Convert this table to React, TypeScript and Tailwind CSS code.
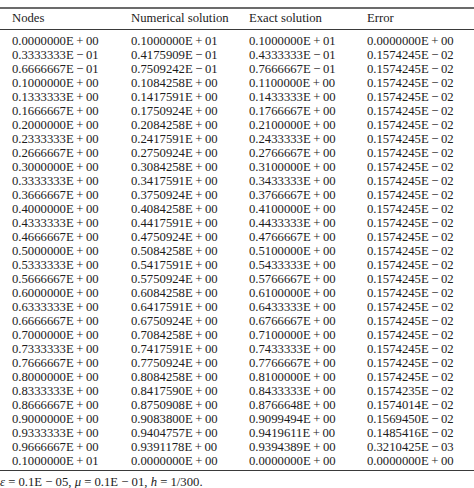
import React from 'react';

const rows: string[][] = [
  ['0.0000000E+00', '0.1000000E+01', '0.1000000E+01', '0.0000000E+00'],
  ['0.3333333E-01', '0.4175909E-01', '0.4333333E-01', '0.1574245E-02'],
  ['0.6666667E-01', '0.7509242E-01', '0.7666667E-01', '0.1574245E-02'],
  ['0.1000000E+00', '0.1084258E+00', '0.1100000E+00', '0.1574245E-02'],
  ['0.1333333E+00', '0.1417591E+00', '0.1433333E+00', '0.1574245E-02'],
  ['0.1666667E+00', '0.1750924E+00', '0.1766667E+00', '0.1574245E-02'],
  ['0.2000000E+00', '0.2084258E+00', '0.2100000E+00', '0.1574245E-02'],
  ['0.2333333E+00', '0.2417591E+00', '0.2433333E+00', '0.1574245E-02'],
  ['0.2666667E+00', '0.2750924E+00', '0.2766667E+00', '0.1574245E-02'],
  ['0.3000000E+00', '0.3084258E+00', '0.3100000E+00', '0.1574245E-02'],
  ['0.3333333E+00', '0.3417591E+00', '0.3433333E+00', '0.1574245E-02'],
  ['0.3666667E+00', '0.3750924E+00', '0.3766667E+00', '0.1574245E-02'],
  ['0.4000000E+00', '0.4084258E+00', '0.4100000E+00', '0.1574245E-02'],
  ['0.4333333E+00', '0.4417591E+00', '0.4433333E+00', '0.1574245E-02'],
  ['0.4666667E+00', '0.4750924E+00', '0.4766667E+00', '0.1574245E-02'],
  ['0.5000000E+00', '0.5084258E+00', '0.5100000E+00', '0.1574245E-02'],
  ['0.5333333E+00', '0.5417591E+00', '0.5433333E+00', '0.1574245E-02'],
  ['0.5666667E+00', '0.5750924E+00', '0.5766667E+00', '0.1574245E-02'],
  ['0.6000000E+00', '0.6084258E+00', '0.6100000E+00', '0.1574245E-02'],
  ['0.6333333E+00', '0.6417591E+00', '0.6433333E+00', '0.1574245E-02'],
  ['0.6666667E+00', '0.6750924E+00', '0.6766667E+00', '0.1574245E-02'],
  ['0.7000000E+00', '0.7084258E+00', '0.7100000E+00', '0.1574245E-02'],
  ['0.7333333E+00', '0.7417591E+00', '0.7433333E+00', '0.1574245E-02'],
  ['0.7666667E+00', '0.7750924E+00', '0.7766667E+00', '0.1574245E-02'],
  ['0.8000000E+00', '0.8084258E+00', '0.8100000E+00', '0.1574245E-02'],
  ['0.8333333E+00', '0.8417590E+00', '0.8433333E+00', '0.1574235E-02'],
  ['0.8666667E+00', '0.8750908E+00', '0.8766648E+00', '0.1574014E-02'],
  ['0.9000000E+00', '0.9083800E+00', '0.9099494E+00', '0.1569450E-02'],
  ['0.9333333E+00', '0.9404757E+00', '0.9419611E+00', '0.1485416E-02'],
  ['0.9666667E+00', '0.9391178E+00', '0.9394389E+00', '0.3210425E-03'],
  ['0.1000000E+01', '0.0000000E+00', '0.0000000E+00', '0.0000000E+00'],
];

// 0.1574245E-02 -> 0.1574245E − 02 with typeset operator spacing
function fmt(v: string) {
  const m = v.match(/^(.*E)([+-])(\d+)$/);
  if (!m) return v;
  return `${m[1]}\u2009${m[2] === '-' ? '\u2212' : '+'}\u2009${m[3]}`;
}

const cols = 'grid grid-cols-[131px_118px_118px_107px]';

export default function App() {
  return (
    <div className="h-[488px] w-[474px] overflow-hidden bg-white pt-[7px] text-[12.7px] text-[#1c1c1c] font-['Liberation_Serif',serif]">
      <div className="border-t-2 border-[#6b6b6b]">
        <div className={`${cols} h-[21px] items-center border-b border-[#3a3a3a]`}>
          <div className="pl-[12px]">Nodes</div>
          <div>Numerical solution</div>
          <div>Exact solution</div>
          <div>Error</div>
        </div>
        <div className="pt-[4px] pb-[2px] border-b border-[#3a3a3a]">
          {rows.map((r, i) => (
            <div key={i} className={`${cols} h-[14px] leading-[14px] whitespace-nowrap`}>
              <div className="pl-[12px]">{fmt(r[0])}</div>
              <div>{fmt(r[1])}</div>
              <div>{fmt(r[2])}</div>
              <div>{fmt(r[3])}</div>
            </div>
          ))}
        </div>
      </div>
      <div className="h-[14px] pt-[4px] leading-[14px] whitespace-nowrap">
        <i>ε</i> = 0.1E − 05, <i>μ</i> = 0.1E − 01, <i>h</i> = 1/300.
      </div>
    </div>
  );
}
